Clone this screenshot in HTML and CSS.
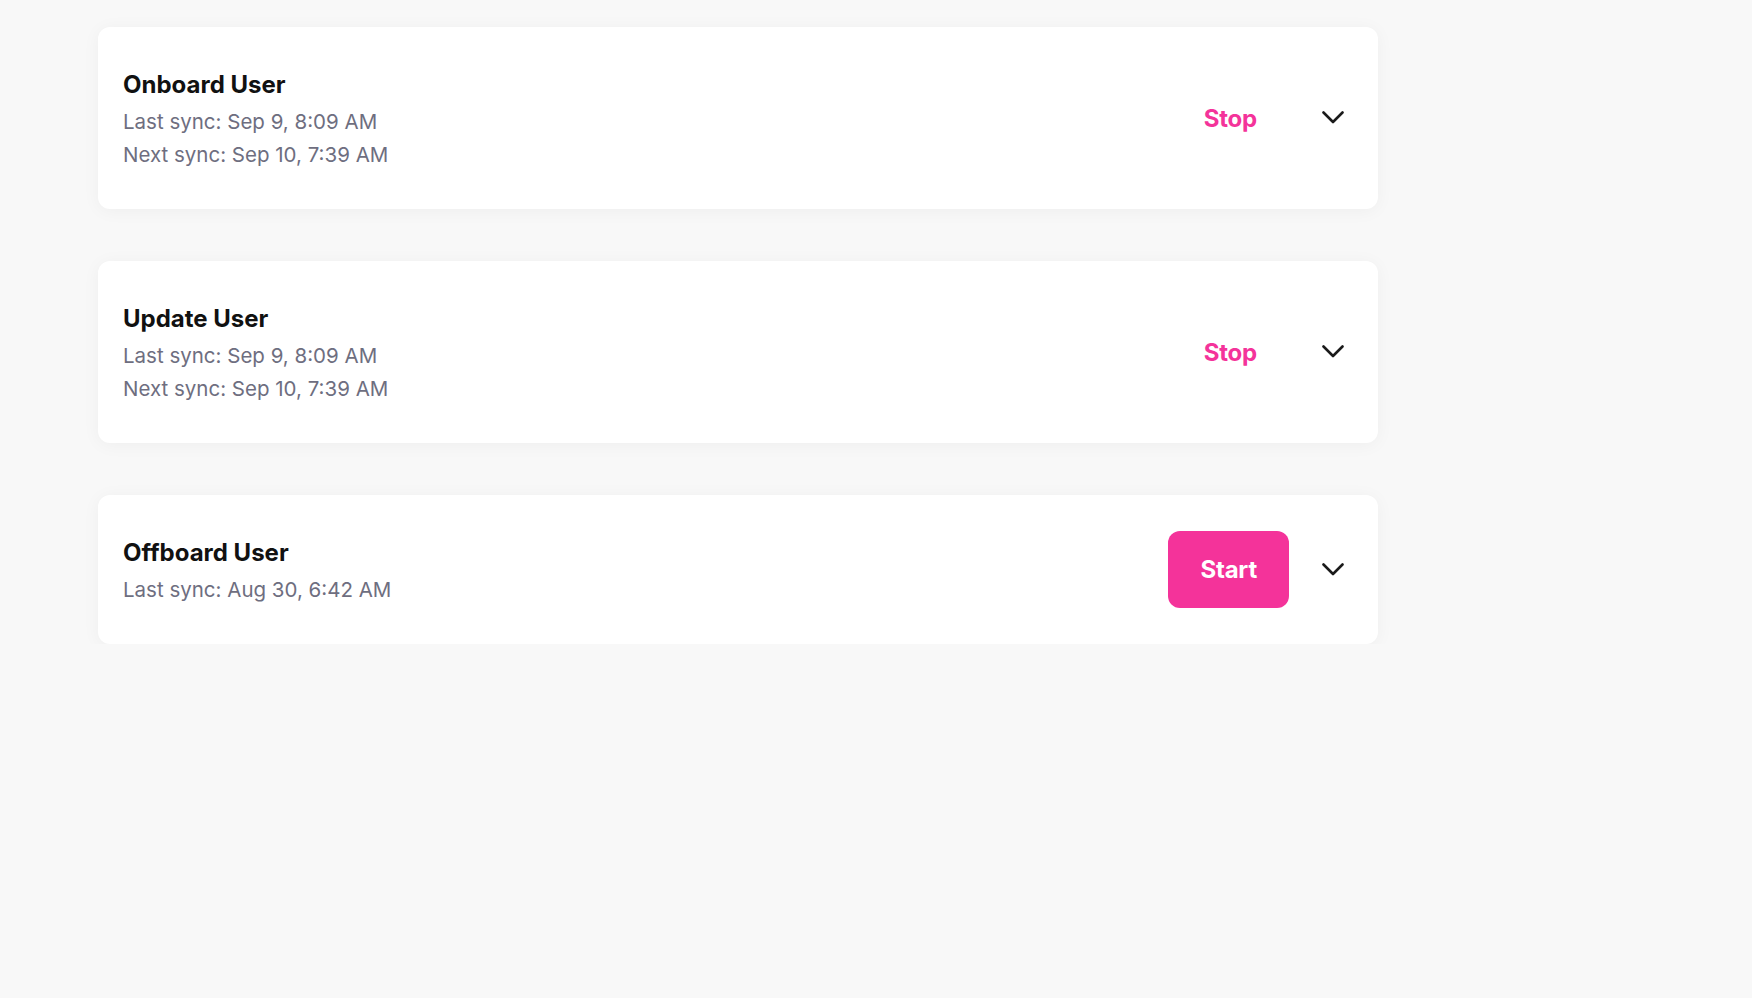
FILE: index.html
```html
<!DOCTYPE html>
<html lang="en">
<head>
<meta charset="utf-8">
<title>Syncs</title>
<link rel="stylesheet" href="styles.css">
</head>
<body>
<main class="list">
  <section class="card">
    <div class="info">
      <h2 class="title">Onboard User</h2>
      <p class="meta">Last sync: Sep 9, 8:09 AM</p>
      <p class="meta">Next sync: Sep 10, 7:39 AM</p>
    </div>
    <div class="actions">
      <button class="btn btn-ghost">Stop</button>
      <svg class="chev" width="22" height="14" viewBox="0 0 22 14"><polyline points="1.5,1.5 11,11 20.5,1.5" fill="none" stroke="#1a1a1a" stroke-width="2.6" stroke-linecap="round" stroke-linejoin="round"/></svg>
    </div>
  </section>
  <section class="card">
    <div class="info">
      <h2 class="title">Update User</h2>
      <p class="meta">Last sync: Sep 9, 8:09 AM</p>
      <p class="meta">Next sync: Sep 10, 7:39 AM</p>
    </div>
    <div class="actions">
      <button class="btn btn-ghost">Stop</button>
      <svg class="chev" width="22" height="14" viewBox="0 0 22 14"><polyline points="1.5,1.5 11,11 20.5,1.5" fill="none" stroke="#1a1a1a" stroke-width="2.6" stroke-linecap="round" stroke-linejoin="round"/></svg>
    </div>
  </section>
  <section class="card">
    <div class="info">
      <h2 class="title">Offboard User</h2>
      <p class="meta">Last sync: Aug 30, 6:42 AM</p>
    </div>
    <div class="actions">
      <button class="btn btn-primary">Start</button>
      <svg class="chev" width="22" height="14" viewBox="0 0 22 14"><polyline points="1.5,1.5 11,11 20.5,1.5" fill="none" stroke="#1a1a1a" stroke-width="2.6" stroke-linecap="round" stroke-linejoin="round"/></svg>
    </div>
  </section>
</main>
</body>
</html>
```
FILE: styles.css
```css
html, body {
  margin: 0;
  padding: 0;
  background: #f8f8f8;
  font-family: Inter, "Noto Sans", "Liberation Sans", sans-serif;
}

.list {
  width: 1280px;
  padding: 27px 0 0 98px;
  display: flex;
  flex-direction: column;
  gap: 52px;
}

.card {
  background: #ffffff;
  border-radius: 12px;
  box-shadow: 0 2px 18px rgba(0, 0, 0, 0.045);
  display: flex;
  align-items: center;
  justify-content: space-between;
  padding: 36px 34px 36px 25px;
}

.info {
  display: flex;
  flex-direction: column;
  padding: 2px 0;
}

.title {
  margin: 0;
  font-size: 24px;
  line-height: 40px;
  font-weight: 700;
  color: #111111;
  letter-spacing: 0;
}

.meta {
  margin: 0;
  font-size: 20.5px;
  line-height: 33px;
  font-weight: 400;
  color: #6e6e80;
  letter-spacing: 0;
}

.actions {
  display: flex;
  align-items: center;
  gap: 33px;
}

.btn {
  font-family: inherit;
  font-size: 24px;
  font-weight: 700;
  line-height: 29px;
  padding: 24px 32px;
  border: none;
  border-radius: 12px;
  cursor: pointer;
  letter-spacing: -0.2px;
}

.btn-ghost {
  background: transparent;
  color: #f4339a;
}

.btn-primary {
  background: #f4339a;
  color: #ffffff;
}

.chev {
  display: block;
}
```
